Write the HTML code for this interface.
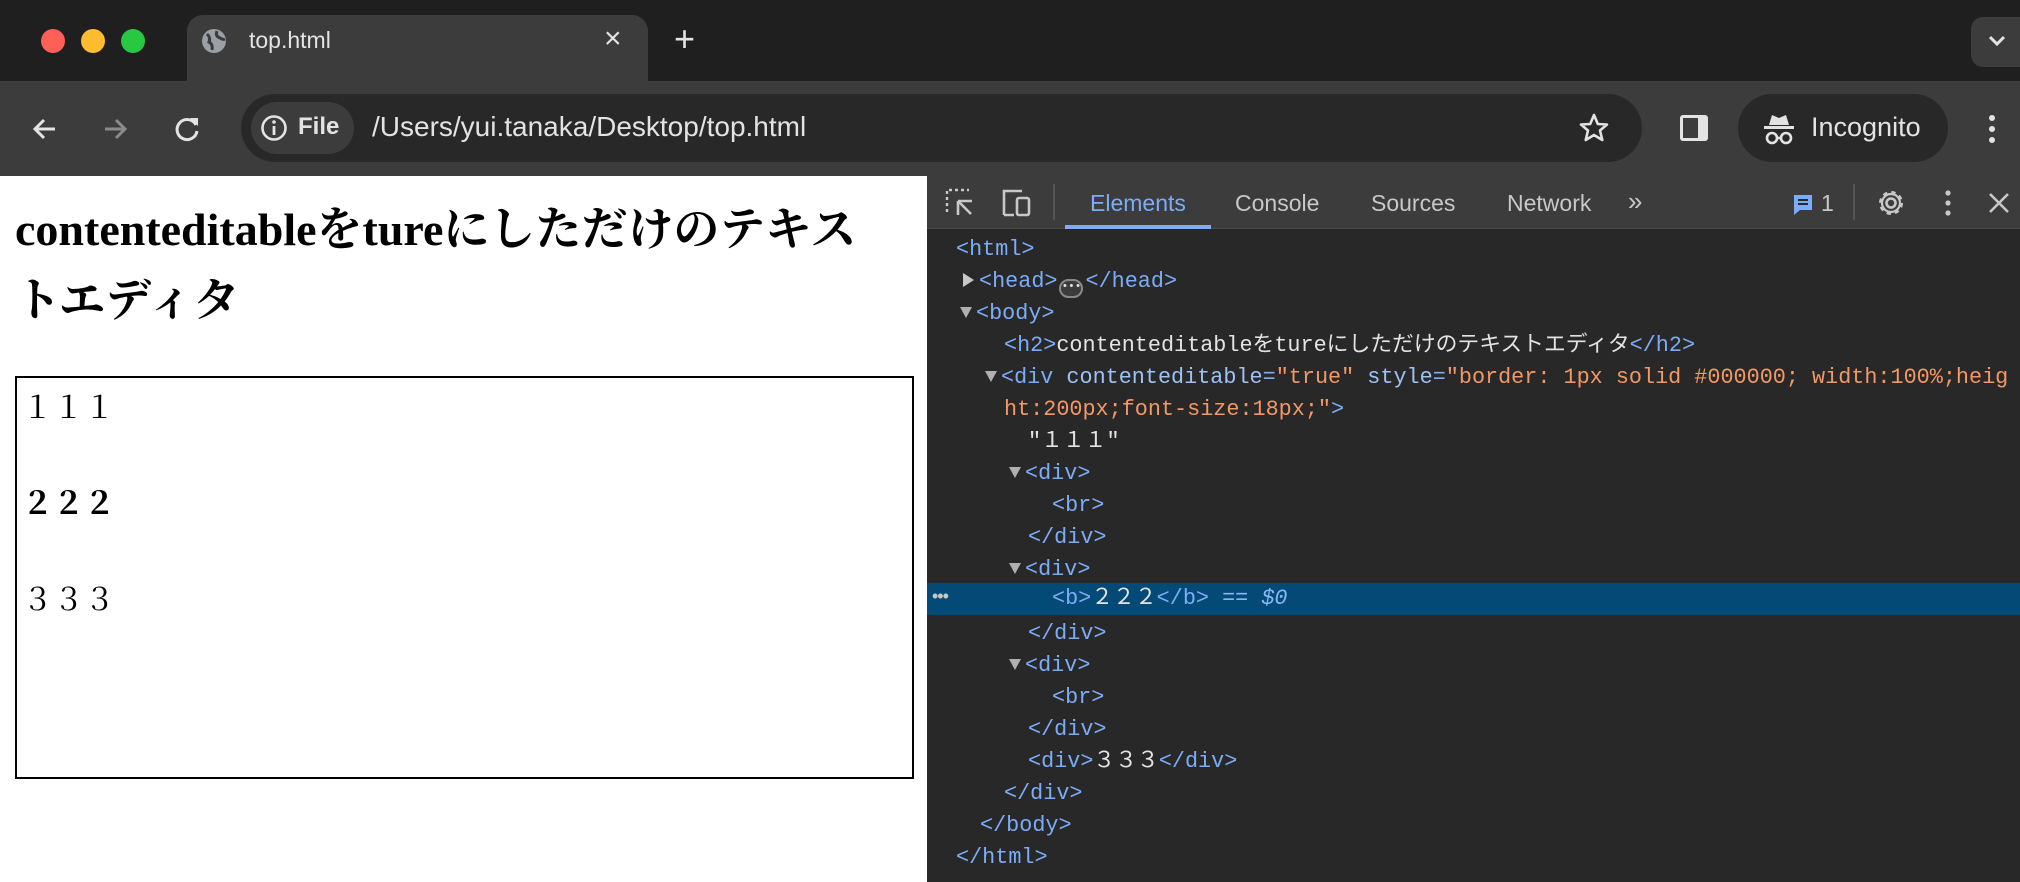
<!DOCTYPE html>
<html><head><meta charset="utf-8">
<style>
*{margin:0;padding:0;box-sizing:border-box}
body{width:2020px;height:882px;overflow:hidden;background:#1f1f1f;position:relative;font-family:"Liberation Sans",sans-serif}
.abs{position:absolute}
.tabbar{left:0;top:0;width:2020px;height:81px;background:#1f1f1f}
.tab{left:187px;top:15px;width:461px;height:66px;background:#3c3c3c;border-radius:16px 16px 0 0}
.tool{left:0;top:81px;width:2020px;height:95px;background:#3c3c3c}
.omni{left:241px;top:94px;width:1401px;height:68px;background:#282828;border-radius:34px}
.page{left:0;top:176px;width:927px;height:706px;background:#fff}
.dt{left:927px;top:176px;width:1093px;height:706px;background:#282828}
.dtbar{left:927px;top:176px;width:1093px;height:53px;background:#3c3c3c;border-bottom:1px solid #4a4a4a}
.tt{color:#e3e3e3;font-size:23px}
.code{font-family:"Liberation Mono","Noto Sans CJK JP",monospace;font-size:21.8px;color:#e3e3e3;white-space:pre;position:absolute;height:32px;line-height:32px}
.t{color:#7cacf8}.an{color:#9ec2f5}.av{color:#f29766}
.tri{display:inline-block;width:0;height:0;border-left:6px solid transparent;border-right:6px solid transparent;border-top:11px solid #b0b0b0;margin-right:4px;vertical-align:1px}
.trir{display:inline-block;width:0;height:0;border-top:7px solid transparent;border-bottom:7px solid transparent;border-left:11px solid #c8c8c8;margin-right:5px;vertical-align:0}
</style></head><body>
<div class="abs tabbar"></div>
<div class="abs" style="left:41px;top:29px;width:24px;height:24px;border-radius:50%;background:#fe5f57"></div>
<div class="abs" style="left:81px;top:29px;width:24px;height:24px;border-radius:50%;background:#febc2e"></div>
<div class="abs" style="left:121px;top:29px;width:24px;height:24px;border-radius:50%;background:#28c840"></div>
<div class="abs tab"></div>
<svg class="abs" style="left:201px;top:28px" width="26" height="26" viewBox="0 0 26 26"><circle cx="13" cy="13" r="12" fill="#9aa0a6"/><path d="M6 6 Q10 10 8 14 Q12 16 11 22 M16 3 Q14 8 19 10 Q22 12 24 11" stroke="#3c3c3c" stroke-width="3" fill="none"/></svg>
<div class="abs tt" style="left:249px;top:27px">top.html</div>
<div class="abs" style="left:604px;top:22px;color:#e3e3e3;font-size:30px">×</div>
<div class="abs" style="left:674px;top:18px;color:#e3e3e3;font-size:36px;font-weight:300">+</div>
<div class="abs" style="left:1971px;top:17px;width:49px;height:50px;background:#3c3c3c;border-radius:12px 0 0 12px"></div>
<svg class="abs" style="left:1988px;top:34px" width="18" height="14"><path d="M2 3 L9 10 L16 3" stroke="#e3e3e3" stroke-width="3" fill="none"/></svg>
<div class="abs tool"></div>
<svg class="abs" style="left:30px;top:114px" width="30" height="30"><path d="M25 15 H6 M14 6 L5 15 L14 24" stroke="#e3e3e3" stroke-width="3" fill="none"/></svg>
<svg class="abs" style="left:100px;top:114px" width="30" height="30"><path d="M5 15 H24 M16 6 L25 15 L16 24" stroke="#8a8a8a" stroke-width="3" fill="none"/></svg>
<svg class="abs" style="left:173px;top:114px" width="30" height="30"><path d="M23 11 A10 10 0 1 0 24 17" stroke="#e3e3e3" stroke-width="3" fill="none"/><path d="M17 4 L25 4 L25 12 Z" fill="#e3e3e3"/></svg>
<div class="abs omni"></div>
<div class="abs" style="left:251px;top:102px;width:103px;height:52px;background:#3c3c3c;border-radius:26px"></div>
<svg class="abs" style="left:260px;top:114px" width="28" height="28"><circle cx="14" cy="14" r="11.5" stroke="#e3e3e3" stroke-width="2.6" fill="none"/><rect x="12.6" y="12" width="2.8" height="9" fill="#e3e3e3"/><circle cx="14" cy="8" r="1.8" fill="#e3e3e3"/></svg>
<div class="abs" style="left:298px;top:113px;color:#e3e3e3;font-size:24px;font-weight:bold">File</div>
<div class="abs" style="left:372px;top:111px;color:#e3e3e3;font-size:28px">/Users/yui.tanaka/Desktop/top.html</div>
<svg class="abs" style="left:1578px;top:112px" width="32" height="32" viewBox="0 0 32 32"><path d="M16 3 L19.8 12 L29 12.5 L22 18.5 L24.3 28 L16 23 L7.7 28 L10 18.5 L3 12.5 L12.2 12 Z" stroke="#e3e3e3" stroke-width="2.6" fill="none" stroke-linejoin="round"/></svg>
<svg class="abs" style="left:1678px;top:112px" width="32" height="32"><rect x="2" y="3" width="28" height="26" rx="3" fill="#e3e3e3"/><rect x="5" y="6" width="15" height="20" fill="#3c3c3c"/></svg>
<div class="abs" style="left:1738px;top:94px;width:210px;height:68px;background:#282828;border-radius:34px"></div>
<svg class="abs" style="left:1762px;top:112px" width="34" height="34" viewBox="0 0 34 34"><path d="M10 3 L17 6 L24 3 L27 13 L7 13 Z" fill="#e3e3e3"/><rect x="2" y="14" width="30" height="3" fill="#e3e3e3"/><circle cx="10" cy="26" r="5" stroke="#e3e3e3" stroke-width="2.6" fill="none"/><circle cx="24" cy="26" r="5" stroke="#e3e3e3" stroke-width="2.6" fill="none"/><path d="M15 26 H19" stroke="#e3e3e3" stroke-width="2.6"/></svg>
<div class="abs" style="left:1811px;top:112px;color:#e3e3e3;font-size:27px">Incognito</div>
<svg class="abs" style="left:1984px;top:112px" width="16" height="34"><circle cx="8" cy="6" r="3" fill="#e3e3e3"/><circle cx="8" cy="17" r="3" fill="#e3e3e3"/><circle cx="8" cy="28" r="3" fill="#e3e3e3"/></svg>

<div class="abs page"></div>
<div class="abs" style="left:15px;top:194px;width:860px;font-family:'Liberation Serif','Noto Serif CJK SC',serif;font-weight:bold;font-size:46px;line-height:71px;color:#000">contenteditableをtureにしただけのテキストエディタ</div>
<div class="abs" style="left:15px;top:376px;width:899px;height:403px;border:2px solid #000;font-family:'Liberation Serif','Noto Serif CJK SC',serif;font-size:31px;line-height:48px;padding:6px 5px;color:#000">１１１<br><br><b>２２２</b><br><br>３３３</div>

<div class="abs dt"></div>
<div class="abs dtbar"></div>
<svg class="abs" style="left:944px;top:187px" width="32" height="32"><path d="M3 25 V3 H25" stroke="#c8c8c8" stroke-width="2.4" stroke-dasharray="3 3" fill="none"/><path d="M14 14 L14 28 M14 14 L28 14 M14 14 L27 27" stroke="#c8c8c8" stroke-width="2.6" fill="none"/></svg>
<svg class="abs" style="left:1000px;top:187px" width="34" height="32"><path d="M4 28 V4 H22 M4 28 H14" stroke="#c8c8c8" stroke-width="2.6" fill="none"/><rect x="17" y="11" width="12" height="17" rx="2" stroke="#c8c8c8" stroke-width="2.6" fill="none"/></svg>
<div class="abs" style="left:1053px;top:184px;width:2px;height:36px;background:#555"></div>
<div class="abs" style="left:1090px;top:190px;color:#7cacf8;font-size:23px">Elements</div>
<div class="abs" style="left:1065px;top:225px;width:146px;height:4px;background:#7cacf8"></div>
<div class="abs" style="left:1235px;top:190px;color:#c8c8c8;font-size:23px">Console</div>
<div class="abs" style="left:1371px;top:190px;color:#c8c8c8;font-size:23px">Sources</div>
<div class="abs" style="left:1507px;top:190px;color:#c8c8c8;font-size:23px">Network</div>
<div class="abs" style="left:1628px;top:186px;color:#c8c8c8;font-size:26px">»</div>
<svg class="abs" style="left:1792px;top:193px" width="22" height="24"><path d="M2 2 H20 V17 H8 L2 22 Z" fill="#7cacf8"/><path d="M6 7 H16 M6 11 H16" stroke="#282828" stroke-width="2"/></svg>
<div class="abs" style="left:1821px;top:190px;color:#c8c8c8;font-size:23px">1</div>
<div class="abs" style="left:1853px;top:184px;width:2px;height:36px;background:#555"></div>
<svg class="abs" style="left:1876px;top:188px" width="30" height="30" viewBox="0 0 30 30"><circle cx="15" cy="15" r="4.5" stroke="#c8c8c8" stroke-width="2.6" fill="none"/><circle cx="15" cy="15" r="10" stroke="#c8c8c8" stroke-width="4" stroke-dasharray="4 3.85" fill="none"/><circle cx="15" cy="15" r="9" stroke="#c8c8c8" stroke-width="2.2" fill="none"/></svg>
<svg class="abs" style="left:1940px;top:188px" width="16" height="30"><circle cx="8" cy="5" r="2.6" fill="#c8c8c8"/><circle cx="8" cy="15" r="2.6" fill="#c8c8c8"/><circle cx="8" cy="25" r="2.6" fill="#c8c8c8"/></svg>
<svg class="abs" style="left:1987px;top:191px" width="24" height="24"><path d="M3 3 L21 21 M21 3 L3 21" stroke="#c8c8c8" stroke-width="2.6"/></svg>

<div class="abs" style="left:927px;top:583px;width:1093px;height:32px;background:#044a76"></div>
<div class="abs" style="left:932px;top:586px;color:#c8c8c8;font-size:18px;letter-spacing:-1px">•••</div>

<div class="code" style="left:956px;top:234px"><span class="t">&lt;html&gt;</span></div>
<div class="code" style="left:963px;top:266px"><span class="trir"></span><span class="t">&lt;head&gt;</span><span style="display:inline-block;width:24px;height:19px;border:2px solid #8a8a8a;border-radius:10px;background:#3c3c3c;font-size:11px;line-height:13px;text-align:center;vertical-align:-2px;margin:0 2px">•••</span><span class="t">&lt;/head&gt;</span></div>
<div class="code" style="left:960px;top:298px"><span class="tri"></span><span class="t">&lt;body&gt;</span></div>
<div class="code" style="left:1004px;top:330px"><span class="t">&lt;h2&gt;</span>contenteditableをtureにしただけのテキストエディタ<span class="t">&lt;/h2&gt;</span></div>
<div class="code" style="left:985px;top:362px"><span class="tri"></span><span class="t">&lt;div </span><span class="an">contenteditable</span><span class="t">=</span><span class="av">"true"</span><span class="an"> style</span><span class="t">=</span><span class="av">"border: 1px solid #000000; width:100%;heig</span></div>
<div class="code" style="left:1004px;top:394px"><span class="av">ht:200px;font-size:18px;"</span><span class="t">&gt;</span></div>
<div class="code" style="left:1028px;top:426px">"１１１"</div>
<div class="code" style="left:1009px;top:458px"><span class="tri"></span><span class="t">&lt;div&gt;</span></div>
<div class="code" style="left:1052px;top:490px"><span class="t">&lt;br&gt;</span></div>
<div class="code" style="left:1028px;top:522px"><span class="t">&lt;/div&gt;</span></div>
<div class="code" style="left:1009px;top:554px"><span class="tri"></span><span class="t">&lt;div&gt;</span></div>
<div class="code" style="left:1052px;top:583px"><span class="t">&lt;b&gt;</span>２２２<span class="t">&lt;/b&gt;</span><span style="color:#8ab4f8"> == </span><span style="color:#8ab4f8;font-style:italic">$0</span></div>
<div class="code" style="left:1028px;top:618px"><span class="t">&lt;/div&gt;</span></div>
<div class="code" style="left:1009px;top:650px"><span class="tri"></span><span class="t">&lt;div&gt;</span></div>
<div class="code" style="left:1052px;top:682px"><span class="t">&lt;br&gt;</span></div>
<div class="code" style="left:1028px;top:714px"><span class="t">&lt;/div&gt;</span></div>
<div class="code" style="left:1028px;top:746px"><span class="t">&lt;div&gt;</span>３３３<span class="t">&lt;/div&gt;</span></div>
<div class="code" style="left:1004px;top:778px"><span class="t">&lt;/div&gt;</span></div>
<div class="code" style="left:980px;top:810px"><span class="t">&lt;/body&gt;</span></div>
<div class="code" style="left:956px;top:842px"><span class="t">&lt;/html&gt;</span></div>
</body></html>
